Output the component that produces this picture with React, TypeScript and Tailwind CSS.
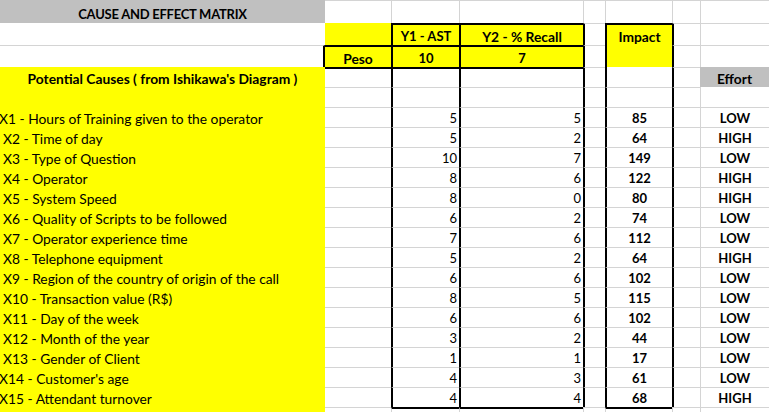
import React from 'react';

type Fill = 'w' | 'y' | 'g';
type Align = 'l' | 'c' | 'r';

const FILL: Record<Fill, string> = {
  w: 'bg-white',
  y: 'bg-[#ffff00]',
  g: 'bg-[#c0c0c0]',
};
const TOP = ['', 'border-t border-t-[#d4d4d4]', 'border-t-2 border-t-black'];
const LEFT = ['', 'border-l border-l-[#d4d4d4]', 'border-l-2 border-l-black'];

const data: { label: string; shift: string; y1: number; y2: number; impact: number; effort: string }[] = [
  { label: 'X1 - Hours of Training given to the operator', shift: '-ml-[1px]', y1: 5, y2: 5, impact: 85, effort: 'LOW' },
  { label: 'X2 - Time of day', shift: 'ml-[3px]', y1: 5, y2: 2, impact: 64, effort: 'HIGH' },
  { label: 'X3 - Type of Question', shift: 'ml-[3px]', y1: 10, y2: 7, impact: 149, effort: 'LOW' },
  { label: 'X4 - Operator', shift: 'ml-[3px]', y1: 8, y2: 6, impact: 122, effort: 'HIGH' },
  { label: 'X5 - System Speed', shift: 'ml-[3px]', y1: 8, y2: 0, impact: 80, effort: 'HIGH' },
  { label: 'X6 - Quality of Scripts to be followed', shift: 'ml-[3px]', y1: 6, y2: 2, impact: 74, effort: 'LOW' },
  { label: 'X7 - Operator experience time', shift: 'ml-[3px]', y1: 7, y2: 6, impact: 112, effort: 'LOW' },
  { label: 'X8 - Telephone equipment', shift: 'ml-[3px]', y1: 5, y2: 2, impact: 64, effort: 'HIGH' },
  { label: 'X9 - Region of the country of origin of the call', shift: 'ml-[3px]', y1: 6, y2: 6, impact: 102, effort: 'LOW' },
  { label: 'X10 - Transaction value (R$)', shift: 'ml-[3px]', y1: 8, y2: 5, impact: 115, effort: 'LOW' },
  { label: 'X11 - Day of the week', shift: 'ml-[3px]', y1: 6, y2: 6, impact: 102, effort: 'LOW' },
  { label: 'X12 - Month of the year', shift: 'ml-[3px]', y1: 3, y2: 2, impact: 44, effort: 'LOW' },
  { label: 'X13 - Gender of Client', shift: 'ml-[3px]', y1: 1, y2: 1, impact: 17, effort: 'LOW' },
  { label: "X14 - Customer's age", shift: '-ml-[1px]', y1: 4, y2: 3, impact: 61, effort: 'LOW' },
  { label: 'X15 - Attendant turnover', shift: '-ml-[1px]', y1: 4, y2: 4, impact: 68, effort: 'HIGH' },
];

const NROWS = 21;
const NCOLS = 8;

function fillOf(r: number, c: number): Fill {
  if (r === 0) return c === 0 ? 'g' : 'w';
  if (r === 1 || r === 2) return (['w', 'y', 'y', 'y', 'w', 'y', 'w', 'w'] as Fill[])[c];
  if (r === 3) return c === 0 ? 'y' : c === 7 ? 'g' : 'w';
  return c === 0 ? 'y' : 'w';
}

function topOf(r: number, c: number): number {
  if (r === 1 && (c === 2 || c === 3 || c === 5)) return 2;
  if ((r === 2 || r === 3) && c >= 1 && c <= 3) return 2;
  if (r === 20 && (c === 2 || c === 3 || c === 5)) return 2;
  if (r === 0) return c === 0 ? 0 : 1;
  return fillOf(r, c) === 'w' && fillOf(r - 1, c) === 'w' ? 1 : 0;
}

function leftOf(r: number, c: number): number {
  if (r >= 1 && r <= 19 && c >= 2 && c <= 6) return 2;
  if (c === 0) return 0;
  return fillOf(r, c) === 'w' && fillOf(r, c - 1) === 'w' ? 1 : 0;
}

type Content = { text: string; bold?: boolean; align: Align; extra?: string; caps?: boolean };

function contentOf(r: number, c: number): Content | null {
  if (r === 0 && c === 0) return { text: 'CAUSE AND EFFECT MATRIX', bold: true, align: 'c', caps: true, extra: 'tracking-[-0.25px]' };
  if (r === 1 && c === 2) return { text: 'Y1 - AST', bold: true, align: 'c', caps: true };
  if (r === 1 && c === 3) return { text: 'Y2 - % Recall', bold: true, align: 'c' };
  if (r === 1 && c === 5) return { text: 'Impact', bold: true, align: 'c' };
  if (r === 2 && c === 1) return { text: 'Peso', bold: true, align: 'c' };
  if (r === 2 && c === 2) return { text: '10', bold: true, align: 'c', caps: true };
  if (r === 2 && c === 3) return { text: '7', bold: true, align: 'c', caps: true };
  if (r === 3 && c === 0) return { text: "Potential Causes ( from Ishikawa's Diagram )", bold: true, align: 'c' };
  if (r === 3 && c === 7) return { text: 'Effort', bold: true, align: 'c' };
  if (r >= 5 && r <= 19) {
    const d = data[r - 5];
    if (c === 0) return { text: d.label, align: 'l', extra: d.shift };
    if (c === 2) return { text: String(d.y1), align: 'r', caps: true };
    if (c === 3) return { text: String(d.y2), align: 'r', caps: true };
    if (c === 5) return { text: String(d.impact), bold: true, align: 'c', caps: true };
    if (c === 7) return { text: d.effort, bold: true, align: 'c', caps: true };
  }
  return null;
}

const ALIGN: Record<Align, string> = {
  l: 'justify-start',
  c: 'justify-center',
  r: 'justify-end pr-[2px]',
};

export default function App() {
  const cells: React.ReactNode[] = [];
  for (let r = 0; r < NROWS; r++) {
    for (let c = 0; c < NCOLS; c++) {
      const content = contentOf(r, c);
      const special = r === 2 && c === 0 ? 'border-r-2 border-r-black' : '';
      const cls = [
        'flex items-end overflow-hidden pb-[1.5px]',
        FILL[fillOf(r, c)],
        TOP[topOf(r, c)],
        LEFT[leftOf(r, c)],
        special,
        content ? ALIGN[content.align] : '',
      ].join(' ');
      cells.push(
        <div key={`${r}-${c}`} className={cls}>
          {content && (
            <span
              className={[
                'whitespace-nowrap leading-[15px] text-black',
                content.caps ? 'text-[13px]' : 'text-[13.8px]',
                content.bold ? 'font-bold' : 'font-normal',
                content.extra ?? '',
              ].join(' ')}
            >
              {content.text}
            </span>
          )}
        </div>
      );
    }
  }

  return (
    <div className="w-[769px] h-[412px] overflow-hidden bg-white font-['Lato','Liberation_Sans',sans-serif]">
      <div className="grid grid-cols-[325px_66px_68px_124px_22px_67px_28px_69px] grid-rows-[23px_22px_22px_20px_20px_repeat(15,20px)_5px]">
        {cells}
      </div>
    </div>
  );
}
